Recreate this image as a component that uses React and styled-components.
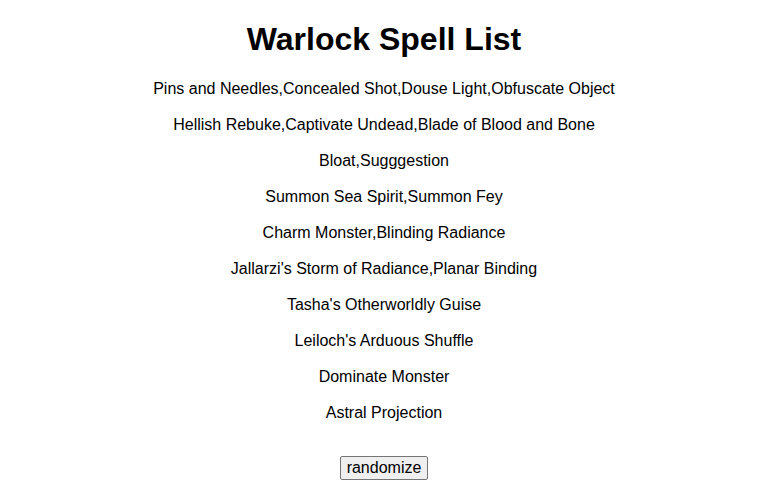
import React from 'react';
import styled, { createGlobalStyle } from 'styled-components';

const Global = createGlobalStyle`
  body {
    margin: 0;
    background: #ffffff;
    font-family: "Liberation Sans", Arial, sans-serif;
    color: #000000;
  }
`

const Page = styled.div`
  text-align: center;
  padding-top: 1px;
`

const Title = styled.h1`
  font-size: 32px;
  font-weight: 700;
  margin: 20px 0 21px;
  line-height: 37px;
`

const Level = styled.p`
  font-size: 16px;
  line-height: 20px;
  margin: 16px 0;
`

const Button = styled.button`
  font-family: "Liberation Sans", Arial, sans-serif;
  font-size: 16px;
  line-height: 18px;
  height: 24px;
  margin-top: 17px;
  padding: 2px 6px;
  background: #efefef;
  border: 1px solid #767676;
  border-radius: 2px;
  color: #000000;
`

const levels = [
  'Pins and Needles,Concealed Shot,Douse Light,Obfuscate Object',
  'Hellish Rebuke,Captivate Undead,Blade of Blood and Bone',
  'Bloat,Sugggestion',
  'Summon Sea Spirit,Summon Fey',
  'Charm Monster,Blinding Radiance',
  "Jallarzi's Storm of Radiance,Planar Binding",
  "Tasha's Otherworldly Guise",
  "Leiloch's Arduous Shuffle",
  'Dominate Monster',
  'Astral Projection',
]

const App = () => {
  return (
    <Page>
      <Global />
      <Title>Warlock Spell List</Title>
      {levels.map((item, index) => (
        <Level key={index}>{item}</Level>
      ))}
      <Button>randomize</Button>
    </Page>
  )
}

export default App;
